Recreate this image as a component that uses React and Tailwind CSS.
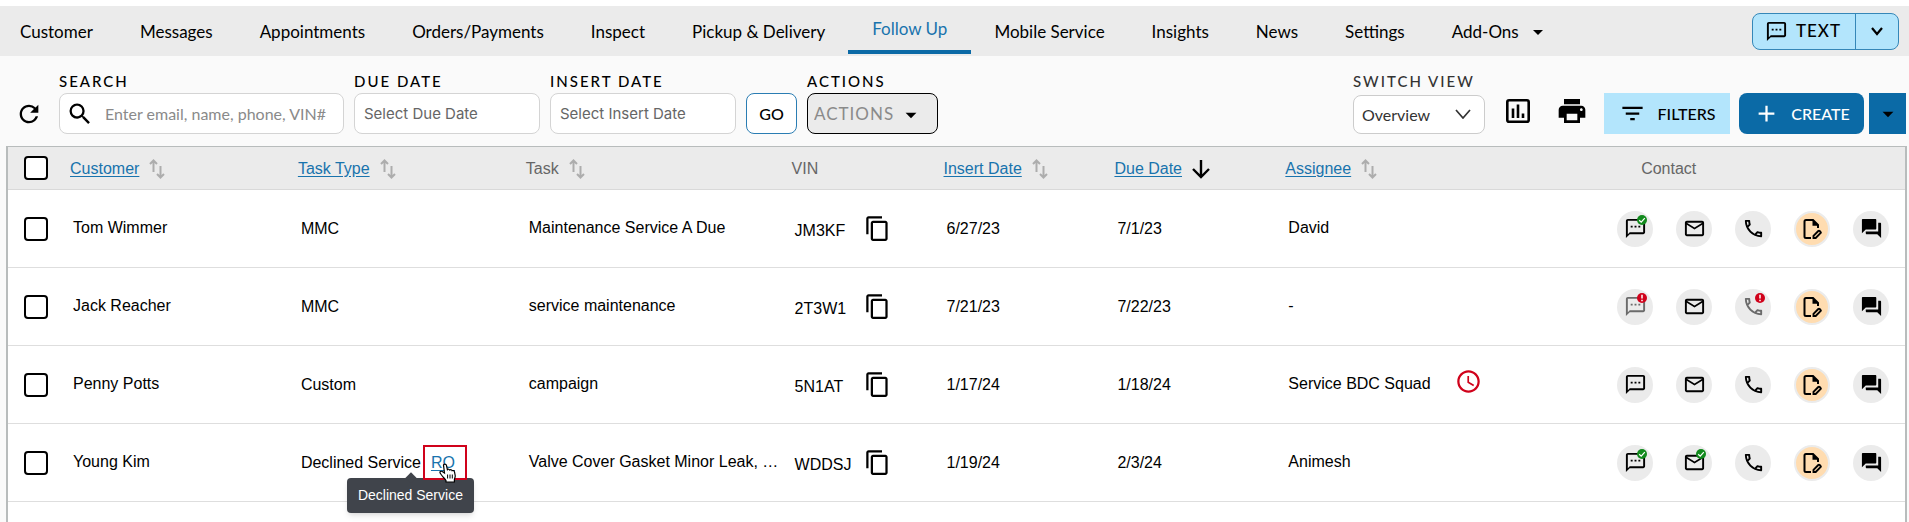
import React, { useState } from 'react';
import {
  MdAdd,
  MdAccessTime,
  MdArrowDropDown,
  MdContentCopy,
  MdFilterList,
  MdForum,
  MdOutlineEmail,
  MdOutlinePhone,
  MdOutlineTextsms,
  MdPrint,
  MdRefresh,
  MdSearch,
} from 'react-icons/md';

const navItems = [
  'Customer',
  'Messages',
  'Appointments',
  'Orders/Payments',
  'Inspect',
  'Pickup & Delivery',
  'Follow Up',
  'Mobile Service',
  'Insights',
  'News',
  'Settings',
];

const columns = [
  { label: 'Customer', width: 'w-[12%]', link: true, sort: 'both' },
  { label: 'Task Type', width: 'w-[12%]', link: true, sort: 'both' },
  { label: 'Task', width: 'w-[14%]', sort: 'both' },
  { label: 'VIN', width: 'w-[8%]' },
  { label: 'Insert Date', width: 'w-[9%]', link: true, sort: 'both' },
  { label: 'Due Date', width: 'w-[9%]', link: true, sort: 'down' },
  { label: 'Assignee', width: 'w-[17%]', link: true, sort: 'both' },
];

const tasks = [
  { id: 1, customer: 'Tom Wimmer', type: 'MMC', task: 'Maintenance Service A Due', vin: 'JM3KF', inserted: '6/27/23', due: '7/1/23', assignee: 'David', text: 'ok' },
  { id: 2, customer: 'Jack Reacher', type: 'MMC', task: 'service maintenance', vin: '2T3W1', inserted: '7/21/23', due: '7/22/23', assignee: '-', text: 'error', phone: 'error' },
  { id: 3, customer: 'Penny Potts', type: 'Custom', task: 'campaign', vin: '5N1AT', inserted: '1/17/24', due: '1/18/24', assignee: 'Service BDC Squad', overdue: true },
  { id: 4, customer: 'Young Kim', type: 'Declined Service', ro: true, task: 'Valve Cover Gasket Minor Leak, …', vin: 'WDDSJ', inserted: '1/19/24', due: '2/3/24', assignee: 'Animesh', text: 'ok', email: 'ok' },
];

const SortIcon = () => (
  <svg className="h-5 w-4 text-[#adadad]" viewBox="0 0 16 20" fill="none" stroke="currentColor" strokeWidth="2">
    <path d="M4.500 13V2M1 5l3.500-3.500L8 5" />
    <path d="M11.500 7v11M8 15l3.500 3.500L15 15" />
  </svg>
);

const DownIcon = () => (
  <svg className="h-5 w-[18px] text-black" viewBox="0 0 18 20" fill="none" stroke="currentColor" strokeWidth="2.4">
    <path d="M9 1v17M1 10l8 8 8-8" />
  </svg>
);

const ChartIcon = () => (
  <svg className="h-6 w-6" viewBox="0 0 24 24" fill="none" stroke="currentColor" strokeWidth="2.6">
    <rect x="1.300" y="1.300" width="21.400" height="21.400" rx="1.800" />
    <path d="M7 9.500V19M12 5.500V19M17 14.500V19" />
  </svg>
);

const FileEditIcon = () => (
  <svg className="h-5 w-5" viewBox="0 0 20 20" fill="none" stroke="currentColor" strokeWidth="2">
    <path d="M9 19H4a1.500 1.500 0 0 1-1.500-1.500v-15A1.500 1.500 0 0 1 4 1h7l5 5v3" />
    <path d="M10.500 .5v6.300h6.300z" fill="currentColor" stroke="none" />
    <path d="M11.500 19v-2.200l4.800-4.800a1 1 0 0 1 1.400 0l.8.800a1 1 0 0 1 0 1.400L13.700 19z" strokeWidth="1.900" />
  </svg>
);

const HandCursor = () => (
  <svg className="pointer-events-none absolute left-[14px] top-[16px] z-30 h-5 w-[18px]" viewBox="0 0 18 20">
    <path
      d="M4.500 2.200c0-1.500 2.600-1.500 2.900 0l1 4.500c.7-.8 2-.6 2.400.4.8-.7 2-.4 2.300.6 1-.5 2.200 0 2.400 1.200l.7 3.600c.3 1.800-.8 2.700-.8 4.300V19H7v-1.500C5.500 15.500 4 14 2.500 12c-1-1.500-2-2.300-1.500-3.200.6-.9 2-.6 3 .2l1.500 1z"
      fill="white"
      stroke="black"
      strokeWidth="1.200"
    />
    <path d="M8.600 11.500v4M11 11.500v4M13.300 11.500v4" stroke="black" strokeWidth="1" />
  </svg>
);

const Badge = ({ status }) => (
  <svg className="absolute -top-[2px] right-0 h-[10px] w-[10px]" viewBox="0 0 10 10">
    <circle cx="5" cy="5" r="5" fill={status === 'ok' ? '#128a1d' : '#d0021b'} />
    {status === 'ok' ? (
      <path d="M2.200 5.200l2 1.900 3.600-4" fill="none" stroke="white" strokeWidth="1.200" />
    ) : (
      <path d="M5 1.800v3.800M5 6.800v1.400" stroke="white" strokeWidth="1.500" />
    )}
  </svg>
);

const ContactButton = ({ label, status, orange, children }) => (
  <button
    type="button"
    aria-label={label}
    className={`flex h-9 w-9 shrink-0 items-center justify-center rounded-full ${orange ? 'border-2 border-[#ebebeb] bg-[#ffdcb0]' : 'bg-[#ebebeb]'} ${status === 'error' ? 'text-[#6b6b6b]' : 'text-black'}`}
  >
    <span className="relative">
      {children}
      {status && <Badge status={status} />}
    </span>
  </button>
);

const ContactButtons = ({ task }) => (
  <div className="flex justify-end gap-[23px] pr-4">
    <ContactButton label="Text" status={task.text}><MdOutlineTextsms size={23} /></ContactButton>
    <ContactButton label="Email" status={task.email}><MdOutlineEmail size={23} /></ContactButton>
    <ContactButton label="Call" status={task.phone}><MdOutlinePhone size={23} /></ContactButton>
    <ContactButton label="Edit note" orange><FileEditIcon /></ContactButton>
    <ContactButton label="Conversation"><MdForum size={23} /></ContactButton>
  </div>
);

const Checkbox = ({ label, checked, onChange }) => (
  <input
    type="checkbox"
    aria-label={label}
    checked={checked}
    onChange={onChange}
    className="mx-auto block h-6 w-6 appearance-none rounded-[4px] border-2 border-black bg-white checked:bg-[#0b6aa6]"
  />
);

const Field = ({ id, label, children }) => (
  <div className="flex flex-col">
    <label htmlFor={id} className="flex h-[25px] items-center text-[15px] leading-5 font-medium tracking-[2px]">
      {label}
    </label>
    {children}
  </div>
);

const TopNav = () => (
  <header className="mt-[6px] flex h-[50px] items-center justify-between bg-[#ebebeb] pl-5 pr-[10px] text-[17px]">
    <nav className="flex h-full gap-[47px]">
      {navItems.map((item) => (
        <a
          key={item}
          href="#"
          className={
            item === 'Follow Up'
              ? '-mx-6 mb-[2px] flex items-center border-b-4 border-[#0b6aa6] px-6 pt-[2px] whitespace-nowrap text-[#1873ad]'
              : 'flex items-center pt-[2px] whitespace-nowrap'
          }
        >
          {item}
        </a>
      ))}
      <button type="button" className="flex items-center gap-[7px] pt-[2px]">
        Add-Ons
        <MdArrowDropDown size={24} />
      </button>
    </nav>
    <div className="flex h-[37px] overflow-hidden rounded-lg border border-[#3587b8] bg-[#b3e5fc]">
      <button type="button" className="flex items-center gap-2 px-3 font-medium tracking-[1px]">
        <MdOutlineTextsms size={23} />
        <span className="pr-[2px]">TEXT</span>
      </button>
      <button type="button" aria-label="More text options" className="flex w-[43px] items-center justify-center border-l border-[#3587b8]">
        <svg className="h-3 w-3" viewBox="0 0 12 12" fill="none" stroke="currentColor" strokeWidth="2.2">
          <path d="M1 3l5 6 5-6" />
        </svg>
      </button>
    </div>
  </header>
);

const Toolbar = () => (
  <div className="flex items-end justify-between bg-[#fafafa] pb-3 pl-4 pr-[3px] pt-[12px]">
    <div className="flex items-end gap-[10px]">
      <button type="button" aria-label="Refresh" className="mb-1 mr-[7px] flex h-8 w-[26px] items-center justify-center">
        <MdRefresh size={28} className="shrink-0" />
      </button>
      <Field id="search" label="SEARCH">
        <div className="flex h-[41px] w-[285px] items-center rounded-lg border border-[#d4d4d4] bg-white pl-[6px]">
          <MdSearch size={28} className="shrink-0" />
          <input
            id="search"
            type="text"
            placeholder="Enter email, name, phone, VIN#"
            className="ml-[11px] w-full min-w-0 pr-2 text-[16px] placeholder:text-[#8a8a8a] outline-none"
          />
        </div>
      </Field>
      <Field id="due-date" label="DUE DATE">
        <input
          id="due-date"
          type="text"
          placeholder="Select Due Date"
          className="h-[41px] w-[186px] rounded-lg border border-[#d4d4d4] bg-white px-[9px] font-[Inter,sans-serif] text-[15px] placeholder:text-[#666666]"
        />
      </Field>
      <Field id="insert-date" label="INSERT DATE">
        <input
          id="insert-date"
          type="text"
          placeholder="Select Insert Date"
          className="h-[41px] w-[186px] rounded-lg border border-[#d4d4d4] bg-white px-[9px] font-[Inter,sans-serif] text-[15px] placeholder:text-[#666666]"
        />
      </Field>
      <button type="button" className="h-[41px] w-[51px] rounded-lg border border-[#2a7db3] bg-white text-[16px] font-medium">
        GO
      </button>
      <Field id="actions" label="ACTIONS">
        <div className="relative">
          <select
            id="actions"
            disabled
            className="h-[41px] w-[131px] appearance-none rounded-lg border border-black bg-[#ebebeb] pl-[6px] text-[17px] tracking-[1px] text-[#8a8a8a] opacity-100"
          >
            <option>ACTIONS</option>
          </select>
          <MdArrowDropDown size={26} className="pointer-events-none absolute right-[14px] top-[9px]" />
        </div>
      </Field>
    </div>

    <div className="flex items-end">
      <div className="mr-[18px] text-[#333333]">
        <Field id="view" label="SWITCH VIEW">
          <div className="relative">
            <select
              id="view"
              className="mt-[2px] h-[39px] w-[132px] appearance-none rounded-lg border border-[#cccccc] bg-white pl-2 text-[16px]"
            >
              <option>Overview</option>
            </select>
            <svg className="pointer-events-none absolute right-[14px] top-4 h-[10px] w-4" viewBox="0 0 16 10" fill="none" stroke="currentColor" strokeWidth="1.7">
              <path d="M1 1l7 8 7-8" />
            </svg>
          </div>
        </Field>
      </div>
      <div className="flex h-[41px] items-center gap-[26px] pl-[3px] pb-[5px]">
        <button type="button" aria-label="Reports">
          <ChartIcon />
        </button>
        <button type="button" aria-label="Print">
          <MdPrint size={32} />
        </button>
      </div>
      <button type="button" className="ml-4 flex h-[41px] w-[126px] items-center justify-center gap-3 bg-[#b3e5fc] text-[16px] font-medium">
        <MdFilterList size={27} />
        FILTERS
      </button>
      <button type="button" className="ml-[9px] flex h-[41px] w-[125px] items-center justify-center gap-[11px] rounded-lg bg-[#0b6aa6] text-[16px] font-medium text-white">
        <MdAdd size={27} />
        CREATE
      </button>
      <button type="button" aria-label="More create options" className="ml-[5px] flex h-[41px] w-[37px] items-center justify-center bg-[#0b6aa6]">
        <MdArrowDropDown size={26} />
      </button>
    </div>
  </div>
);

const TaskType = ({ task }) => {
  if (!task.ro) return task.type;

  return (
    <div className="relative flex items-center gap-[2px] whitespace-nowrap">
      {task.type}
      <span className="relative z-20 flex h-[35px] w-11 items-center border-2 border-[#d0021b] pl-[6px]">
        <a href="#" className="text-[#1873ad] underline underline-offset-2">RO</a>
        <HandCursor />
      </span>
      <div role="tooltip" className="absolute left-[46px] top-[33px] z-10 rounded-[4px] bg-[#40444b] px-[11px] py-2 text-[14px] leading-[19px] text-white shadow-md">
        <span className="absolute -top-1 left-[60px] h-2 w-2 rotate-45 bg-[#40444b]" />
        {task.type}
      </div>
    </div>
  );
};

const TaskTable = () => {
  const [selected, setSelected] = useState([]);

  const toggle = (id) => {
    setSelected(selected.includes(id) ? selected.filter((s) => s !== id) : [...selected, id]);
  };

  const toggleAll = () => {
    setSelected(selected.length === tasks.length ? [] : tasks.map((t) => t.id));
  };

  return (
    <div className="bg-[#fafafa] pl-[6px] pr-[2px]">
      <table className="w-full table-fixed border-collapse border-2 border-t border-[#b8bcbc] bg-white text-left font-['Liberation_Sans',Arial,sans-serif] text-[16px] leading-6">
        <thead>
          <tr className="h-[43px] border-b border-[#d9d9d9] bg-[#ebebeb]">
            <th className="w-14">
              <Checkbox label="Select all" checked={selected.length === tasks.length} onChange={toggleAll} />
            </th>
            {columns.map((col) => (
              <th key={col.label} className={`${col.width} pl-[7px] pt-[2px] font-normal text-[#666666]`}>
                <div className="flex items-center gap-[10px]">
                  {col.link ? <a href="#" className="text-[#1873ad] underline underline-offset-2">{col.label}</a> : col.label}
                  {col.sort === 'both' && <SortIcon />}
                  {col.sort === 'down' && <DownIcon />}
                </div>
              </th>
            ))}
            <th className="pl-10 pt-[2px] font-normal text-[#666666]">Contact</th>
          </tr>
        </thead>
        <tbody>
          {tasks.map((task) => (
            <tr key={task.id} className="h-[78px] border-b border-[#dedede]">
              <td>
                <Checkbox label={`Select ${task.customer}`} checked={selected.includes(task.id)} onChange={() => toggle(task.id)} />
              </td>
              <td className="pb-[2px] pl-[10px]">{task.customer}</td>
              <td className="pl-[10px]"><TaskType task={task} /></td>
              <td className="pb-[2px] pl-[10px] whitespace-nowrap">{task.task}</td>
              <td className="pl-[10px]">
                <div className="flex items-center">
                  <span className="w-[69px] pt-1">{task.vin}</span>
                  <button type="button" aria-label="Copy VIN">
                    <MdContentCopy size={27} />
                  </button>
                </div>
              </td>
              <td className="pl-[10px]">{task.inserted}</td>
              <td className="pl-[10px]">{task.due}</td>
              <td className="pb-[2px] pl-[10px]">
                <div className="flex items-center gap-6">
                  {task.assignee}
                  {task.overdue && <MdAccessTime size={27} className="mb-1 text-[#d0021b]" />}
                </div>
              </td>
              <td><ContactButtons task={task} /></td>
            </tr>
          ))}
          <tr className="h-[78px]">
            <td colSpan={7} />
            <td />
            <td><ContactButtons task={{}} /></td>
          </tr>
        </tbody>
      </table>
    </div>
  );
};

const App = () => {
  return (
    <div className="h-screen overflow-hidden bg-white font-[Lato,sans-serif] text-black">
      <TopNav />
      <Toolbar />
      <TaskTable />
    </div>
  );
};

export default App;
